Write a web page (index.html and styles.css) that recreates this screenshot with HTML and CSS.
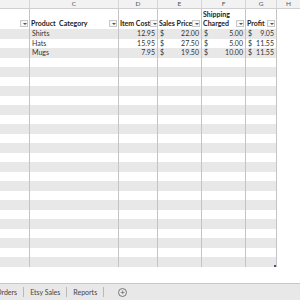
FILE: index.html
```
<!DOCTYPE html>
<html lang="en">
<head>
    <meta charset="UTF-8">
    <title>Etsy Products</title>
    <link rel="stylesheet" href="styles.css">
</head>
<body>
    <div class="sheet">
        <div class="row col-head">
            <div class="cell"></div>
            <div class="cell">C</div>
            <div class="cell">D</div>
            <div class="cell">E</div>
            <div class="cell">F</div>
            <div class="cell">G</div>
            <div class="cell">H</div>
        </div>
        <div class="row title-row">
            <div class="cell"><span class="filter"></span></div>
            <div class="cell"><span>Product&nbsp; Category</span><span class="filter"></span></div>
            <div class="cell"><span>Item Cost</span><span class="filter"></span></div>
            <div class="cell"><span>Sales Price</span><span class="filter"></span></div>
            <div class="cell"><span>Shipping<br>Charged</span><span class="filter"></span></div>
            <div class="cell"><span>Profit</span><span class="filter"></span></div>
            <div class="cell out"></div>
        </div>
        <div id="body"></div>
        <div class="gap"></div>
        <div class="tabs">
            <div class="tab">Orders</div>
            <div class="tab">Etsy Sales</div>
            <div class="tab">Reports</div>
            <div class="add">+</div>
        </div>
    </div>
    <script>
        const data = [
            ['Shirts', '12.95', '22.00', '5.00', '9.05'],
            ['Hats', '15.95', '27.50', '5.00', '11.55'],
            ['Mugs', '7.95', '19.50', '10.00', '11.55']
        ];
        const body = document.getElementById('body');
        for (let i = 0; i < 25; i++) {
            const d = data[i] || ['', '', '', '', ''];
            const row = document.createElement('div');
            row.className = 'row data-row' + (i === 24 ? ' last' : '');
            const money = v => v ? '<span>$</span><span>' + v + '</span>' : '';
            row.innerHTML =
                '<div class="cell"></div>' +
                '<div class="cell">' + d[0] + '</div>' +
                '<div class="cell num">' + d[1] + '</div>' +
                '<div class="cell money">' + money(d[2]) + '</div>' +
                '<div class="cell money">' + money(d[3]) + '</div>' +
                '<div class="cell money">' + money(d[4]) + '</div>' +
                '<div class="cell out"></div>';
            body.appendChild(row);
        }
    </script>
</body>
</html>
```
FILE: styles.css
```
* {
    margin: 0;
    padding: 0;
    box-sizing: border-box;
}

body {
    width: 300px;
    height: 300px;
    overflow: hidden;
    background: #fff;
    font-family: 'Lato', 'Liberation Sans', sans-serif;
    font-size: 7px;
    color: #333;
}

.sheet {
    display: flex;
    flex-direction: column;
    height: 300px;
}

.row {
    display: grid;
    grid-template-columns: 30px 89px 39px 44px 44px 31px 23px;
}

.cell {
    border-right: 1px solid #c4c4c4;
    padding: 0 2px;
    white-space: nowrap;
    overflow: hidden;
}

.cell.out {
    border-right: none;
    background: #fff;
}

.col-head {
    height: 9px;
    background: #f2f2f2;
    border-bottom: 1px solid #d0d0d0;
    color: #555;
    font-size: 6.5px;
}

.col-head .cell {
    text-align: center;
    line-height: 8px;
    border-right-color: #d6d6d6;
}

.col-head .cell:last-child {
    border-right: none;
}

.title-row {
    height: 20px;
    font-weight: bold;
    color: #222;
}

.title-row .cell {
    display: flex;
    align-items: flex-end;
    justify-content: space-between;
    padding: 0 1px 1px 1px;
    line-height: 9px;
}

.filter {
    position: relative;
    flex: none;
    width: 8px;
    height: 7px;
    margin-bottom: 1px;
    margin-left: auto;
    border: 1px solid #c8c8c8;
    background: #f7f7f7;
}

.filter::after {
    content: '';
    position: absolute;
    left: 1.5px;
    top: 2px;
    border-left: 2px solid transparent;
    border-right: 2px solid transparent;
    border-top: 2px solid #555;
}

.data-row {
    height: 9.5px;
    line-height: 9px;
}

.data-row:nth-child(odd) .cell {
    background: #e8e8e8;
}

.data-row:nth-child(odd) .cell.out {
    background: #fff;
}

.num {
    text-align: right;
}

.money {
    display: flex;
    justify-content: space-between;
}

.last .cell:nth-child(6) {
    position: relative;
}

.last .cell:nth-child(6)::after {
    content: '';
    position: absolute;
    right: 0;
    bottom: 0;
    width: 2px;
    height: 2px;
    background: #4a4f7a;
}

.gap {
    flex: 1;
}

.tabs {
    height: 17px;
    display: flex;
    align-items: center;
    background: #e8e8e8;
    border-top: 1px solid #c8c8c8;
    color: #444;
    font-size: 7px;
}

.tab {
    padding: 0 6px;
    border-right: 1px solid #b8b8b8;
    line-height: 10px;
}

.tab:first-child {
    margin-left: -10px;
}

.add {
    margin-left: 14px;
    width: 9px;
    height: 9px;
    border: 1px solid #777;
    border-radius: 50%;
    font-size: 8px;
    line-height: 7px;
    text-align: center;
    color: #555;
}
```
